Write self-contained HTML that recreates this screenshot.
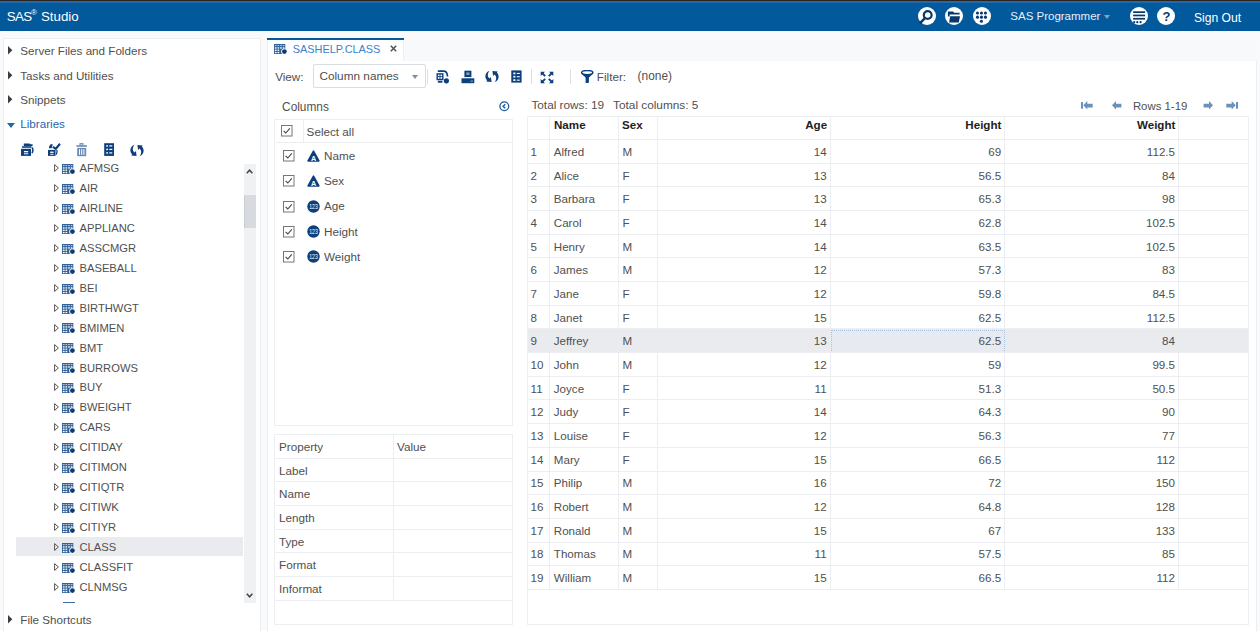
<!DOCTYPE html><html><head><meta charset="utf-8"><style>
html,body{margin:0;padding:0;width:1260px;height:631px;overflow:hidden;background:#fff}
body{position:relative;font-family:"Liberation Sans",sans-serif}
.t{position:absolute;white-space:nowrap;line-height:1}
.r{position:absolute;display:block}
sup{font-size:60%;vertical-align:0;position:relative;top:-0.55em}
</style></head><body>
<div class="r" style="left:0.00px;top:0.00px;width:1260.00px;height:1.20px;background:#2b2420"></div>
<div class="r" style="left:0.00px;top:1.00px;width:1260.00px;height:30.00px;background:#02599b"></div>
<div class="r" style="left:0.00px;top:1.00px;width:1260.00px;height:1.50px;background:#1f6aac"></div>
<div class="t" style="left:6.80px;top:9.84px;font-size:13.3px;color:#fff;font-weight:normal;letter-spacing:-0.6px">SAS</div>
<div class="t" style="left:31.00px;top:9.43px;font-size:8px;color:#fff;font-weight:normal;">®</div>
<div class="t" style="left:41.00px;top:9.84px;font-size:13.3px;color:#fff;font-weight:normal;">Studio</div>
<svg class="r" style="left:918.40px;top:6.90px" width="18" height="18" viewBox="0 0 18 18"><circle cx="9" cy="9" r="9" fill="#fff"/><circle cx="9.7" cy="8.0" r="3.9" fill="none" stroke="#08396c" stroke-width="2.2"/><path d="M7.2 10.8L1.8 16.4" stroke="#08396c" stroke-width="2.4" stroke-linecap="butt"/></svg>
<svg class="r" style="left:945.35px;top:6.90px" width="18" height="18" viewBox="0 0 18 18"><circle cx="9" cy="9" r="9" fill="#fff"/><path d="M2.9 4.4H8L9.3 5.8H14.6V7.4H4.6V9.6H2.9Z" fill="#08396c"/><path d="M5.1 9.2H15L13.8 15.6H4.1Z" fill="#08396c"/></svg>
<svg class="r" style="left:973.00px;top:6.90px" width="18" height="18" viewBox="0 0 18 18"><circle cx="9" cy="9" r="9" fill="#fff"/><circle cx="4.449999999999999" cy="5.95" r="1.55" fill="#08396c"/><circle cx="8.45" cy="5.95" r="1.55" fill="#08396c"/><circle cx="12.45" cy="5.95" r="1.55" fill="#08396c"/><circle cx="4.449999999999999" cy="10.129999999999999" r="1.55" fill="#08396c"/><circle cx="8.45" cy="10.129999999999999" r="1.55" fill="#08396c"/><circle cx="12.45" cy="10.129999999999999" r="1.55" fill="#08396c"/><circle cx="8.45" cy="14.3" r="1.55" fill="#08396c"/></svg>
<svg class="r" style="left:1130.00px;top:6.90px" width="18" height="18" viewBox="0 0 18 18"><circle cx="9" cy="9" r="9" fill="#fff"/><rect x="3.1" y="4.3" width="12" height="1.7" fill="#08396c"/><rect x="3.1" y="7.6000000000000005" width="12" height="1.7" fill="#08396c"/><rect x="3.1" y="10.899999999999999" width="12" height="1.7" fill="#08396c"/><circle cx="4.2" cy="15.2" r="1.1" fill="#08396c"/><circle cx="7.3" cy="15.2" r="1.1" fill="#08396c"/><circle cx="10.6" cy="15.2" r="1.1" fill="#08396c"/></svg>
<svg class="r" style="left:1157.00px;top:6.90px" width="18" height="18" viewBox="0 0 18 18"><circle cx="9" cy="9" r="9" fill="#fff"/><text x="9.6" y="13.6" font-size="13" font-weight="bold" font-family="Liberation Sans" fill="#08396c" text-anchor="middle">?</text></svg>
<div class="t" style="left:1010.30px;top:10.87px;font-size:11.5px;color:#e8eef6;font-weight:normal;">SAS Programmer</div>
<svg class="r" style="left:1104.00px;top:15.00px" width="6" height="4" viewBox="0 0 6 4"><path d="M0 0H6L3 4Z" fill="#7fa3cc"/></svg>
<div class="t" style="left:1194.00px;top:11.76px;font-size:12.1px;color:#fff;font-weight:normal;">Sign Out</div>
<div class="r" style="left:0.00px;top:31.00px;width:1260.00px;height:600.00px;background:#f9fafb"></div>
<div class="r" style="left:3.00px;top:37.50px;width:257.50px;height:600.00px;background:#fff;border:1px solid #eceef1;box-sizing:border-box"></div>
<div class="t" style="left:20.30px;top:45.24px;font-size:11.65px;color:#505050;font-weight:normal;">Server Files and Folders</div>
<svg class="r" style="left:8.00px;top:46.20px" width="5" height="9" viewBox="0 0 5 9"><path d="M0 0L4.3 4.25L0 8.5Z" fill="#3a3a42"/></svg>
<div class="t" style="left:20.30px;top:69.64px;font-size:11.65px;color:#505050;font-weight:normal;">Tasks and Utilities</div>
<svg class="r" style="left:8.00px;top:70.60px" width="5" height="9" viewBox="0 0 5 9"><path d="M0 0L4.3 4.25L0 8.5Z" fill="#3a3a42"/></svg>
<div class="t" style="left:20.30px;top:93.84px;font-size:11.65px;color:#505050;font-weight:normal;">Snippets</div>
<svg class="r" style="left:8.00px;top:94.80px" width="5" height="9" viewBox="0 0 5 9"><path d="M0 0L4.3 4.25L0 8.5Z" fill="#3a3a42"/></svg>
<div class="t" style="left:20.30px;top:117.94px;font-size:11.65px;color:#1f66ae;font-weight:normal;">Libraries</div>
<svg class="r" style="left:6.80px;top:122.50px" width="8" height="5" viewBox="0 0 8 5"><path d="M0 0H8L4 5Z" fill="#1f66ae"/></svg>
<div class="t" style="left:20.30px;top:613.74px;font-size:11.65px;color:#505050;font-weight:normal;">File Shortcuts</div>
<svg class="r" style="left:8.00px;top:614.70px" width="5" height="9" viewBox="0 0 5 9"><path d="M0 0L4.3 4.25L0 8.5Z" fill="#3a3a42"/></svg>
<svg class="r" style="left:20.00px;top:143.00px" width="14" height="14" viewBox="0 0 14 14"><path d="M3.8 0.5H9.5L10.3 1.3H12.6V3H3.8Z" fill="#0d3f7d"/><path d="M2 3.2H11.5V4.8H2Z" fill="#0d3f7d"/><path d="M1 5.8H11V12.9H1Z" fill="#0d3f7d"/><rect x="4" y="8" width="4.2" height="1.3" fill="#fff"/><rect x="4" y="10.3" width="4.2" height="1" fill="#fff"/><path d="M12 4.4Q13.8 7 12 10.2" fill="none" stroke="#0d3f7d" stroke-width="1.5"/></svg>
<svg class="r" style="left:47.00px;top:143.00px" width="14" height="14" viewBox="0 0 14 14"><path d="M1 6.9H8.5V12.9H1Z" fill="#0d3f7d"/><rect x="3.2" y="8.6" width="3.4" height="1.3" fill="#fff"/><rect x="3.2" y="10.8" width="3.4" height="0.9" fill="#fff"/><path d="M2 3.6L3.6 1.2H5.8L4.6 5.2H2Z" fill="#0d3f7d"/><path d="M5.8 3.8L8.8 5.8L13 0.8" fill="none" stroke="#0d3f7d" stroke-width="2.1"/><path d="M9.8 7Q10.6 9.4 9.2 11.6" fill="none" stroke="#0d3f7d" stroke-width="1.3"/></svg>
<svg class="r" style="left:76.00px;top:142.50px" width="12" height="14" viewBox="0 0 12 14"><rect x="4" y="0.6" width="3" height="1.6" fill="none" stroke="#6a8db5" stroke-width="1"/><rect x="0.4" y="2.2" width="10.6" height="1.6" fill="#6a8db5"/><rect x="1.2" y="4.9" width="9" height="8.3" fill="#6a8db5"/><rect x="3.0" y="6.2" width="1" height="5.6" fill="#fff"/><rect x="5.2" y="6.2" width="1" height="5.6" fill="#fff"/><rect x="7.4" y="6.2" width="1" height="5.6" fill="#fff"/></svg>
<svg class="r" style="left:104.00px;top:143.00px" width="11" height="13" viewBox="0 0 11 13"><rect x="0.2" y="0.2" width="9.8" height="12.7" fill="#0d3f7d"/><rect x="2.3" y="2.1" width="1.6" height="1.6" fill="#fff"/><rect x="5.3" y="2.3000000000000003" width="3" height="1.2" fill="#fff"/><rect x="2.3" y="5.6" width="1.6" height="1.6" fill="#fff"/><rect x="5.3" y="5.8" width="3" height="1.2" fill="#fff"/><rect x="2.3" y="9.1" width="1.6" height="1.6" fill="#fff"/><rect x="5.3" y="9.299999999999999" width="3" height="1.2" fill="#fff"/></svg>
<svg class="r" style="left:129.80px;top:143.50px" width="14" height="13" viewBox="0 0 14 13"><path d="M4.4 0.7C1.6 1.7 0.1 4.2 0.4 7C0.6 8.5 1.3 9.5 2.1 10.2L1.3 11.6L6.6 11.9L5.9 6.9L4.6 8.5C3.5 7.7 2.7 6.5 2.8 5.1C2.9 3.3 3.6 1.9 4.4 0.7Z" fill="#0d3f7d"/><path d="M9.6 12.3C12.4 11.3 13.9 8.8 13.6 6C13.4 4.5 12.7 3.5 11.9 2.8L12.7 1.4L7.4 1.1L8.1 6.1L9.4 4.5C10.5 5.3 11.3 6.5 11.2 7.9C11.1 9.7 10.4 11.1 9.6 12.3Z" fill="#0d3f7d"/></svg>
<div class="r" style="left:243.70px;top:163.60px;width:12.30px;height:439.00px;background:#eff1f3"></div>
<div class="r" style="left:243.70px;top:195.10px;width:12.30px;height:33.40px;background:#d7dadf;border-left:1px solid #c9ced4;box-sizing:border-box"></div>
<svg class="r" style="left:246.30px;top:168.50px" width="8" height="5" viewBox="0 0 8 5"><path d="M0.8 4.2L3.6 1.2L6.4 4.2" fill="none" stroke="#444" stroke-width="1.5"/></svg>
<svg class="r" style="left:246.30px;top:593.30px" width="8" height="5" viewBox="0 0 8 5"><path d="M0.8 0.8L3.6 3.8L6.4 0.8" fill="none" stroke="#444" stroke-width="1.5"/></svg>
<div class="r" style="left:62.50px;top:601.80px;width:12.50px;height:1.60px;background:#3f6b9e"></div>
<svg class="r" style="left:53.70px;top:164.20px" width="5" height="8" viewBox="0 0 5 8"><path d="M0.6 0.6L4.4 4L0.6 7.4Z" fill="none" stroke="#555" stroke-width="1"/></svg>
<svg class="r" style="left:62.00px;top:164.00px" width="13" height="11" viewBox="0 0 13 11"><rect x="0" y="0" width="11.3" height="10" fill="#32629a"/><rect x="0.9" y="1.2" width="1.7" height="0.9" fill="#fff" opacity="0.8"/><rect x="3.5" y="1.2" width="1.7" height="0.9" fill="#fff" opacity="0.8"/><rect x="6.1" y="1.2" width="1.7" height="0.9" fill="#fff" opacity="0.8"/><rect x="8.7" y="1.2" width="1.7" height="0.9" fill="#fff" opacity="0.8"/><rect x="0.9" y="3.3" width="1.7" height="1.3" fill="#fff"/><rect x="0.9" y="5.6" width="1.7" height="1.3" fill="#fff"/><rect x="0.9" y="7.9" width="1.7" height="1.3" fill="#fff"/><rect x="3.5" y="3.3" width="1.7" height="1.3" fill="#fff"/><rect x="3.5" y="5.6" width="1.7" height="1.3" fill="#fff"/><rect x="3.5" y="7.9" width="1.7" height="1.3" fill="#fff"/><rect x="6.1" y="3.3" width="1.7" height="1.3" fill="#fff"/><rect x="8.7" y="3.3" width="1.7" height="1.3" fill="#fff"/><circle cx="10.4" cy="7.6" r="3.2" fill="#fff"/><circle cx="10.4" cy="7.6" r="2.4" fill="#0c3c72"/></svg>
<div class="t" style="left:79.50px;top:163.22px;font-size:11.2px;color:#505050;font-weight:normal;">AFMSG</div>
<svg class="r" style="left:53.70px;top:184.13px" width="5" height="8" viewBox="0 0 5 8"><path d="M0.6 0.6L4.4 4L0.6 7.4Z" fill="none" stroke="#555" stroke-width="1"/></svg>
<svg class="r" style="left:62.00px;top:183.93px" width="13" height="11" viewBox="0 0 13 11"><rect x="0" y="0" width="11.3" height="10" fill="#32629a"/><rect x="0.9" y="1.2" width="1.7" height="0.9" fill="#fff" opacity="0.8"/><rect x="3.5" y="1.2" width="1.7" height="0.9" fill="#fff" opacity="0.8"/><rect x="6.1" y="1.2" width="1.7" height="0.9" fill="#fff" opacity="0.8"/><rect x="8.7" y="1.2" width="1.7" height="0.9" fill="#fff" opacity="0.8"/><rect x="0.9" y="3.3" width="1.7" height="1.3" fill="#fff"/><rect x="0.9" y="5.6" width="1.7" height="1.3" fill="#fff"/><rect x="0.9" y="7.9" width="1.7" height="1.3" fill="#fff"/><rect x="3.5" y="3.3" width="1.7" height="1.3" fill="#fff"/><rect x="3.5" y="5.6" width="1.7" height="1.3" fill="#fff"/><rect x="3.5" y="7.9" width="1.7" height="1.3" fill="#fff"/><rect x="6.1" y="3.3" width="1.7" height="1.3" fill="#fff"/><rect x="8.7" y="3.3" width="1.7" height="1.3" fill="#fff"/><circle cx="10.4" cy="7.6" r="3.2" fill="#fff"/><circle cx="10.4" cy="7.6" r="2.4" fill="#0c3c72"/></svg>
<div class="t" style="left:79.50px;top:183.15px;font-size:11.2px;color:#505050;font-weight:normal;">AIR</div>
<svg class="r" style="left:53.70px;top:204.06px" width="5" height="8" viewBox="0 0 5 8"><path d="M0.6 0.6L4.4 4L0.6 7.4Z" fill="none" stroke="#555" stroke-width="1"/></svg>
<svg class="r" style="left:62.00px;top:203.86px" width="13" height="11" viewBox="0 0 13 11"><rect x="0" y="0" width="11.3" height="10" fill="#32629a"/><rect x="0.9" y="1.2" width="1.7" height="0.9" fill="#fff" opacity="0.8"/><rect x="3.5" y="1.2" width="1.7" height="0.9" fill="#fff" opacity="0.8"/><rect x="6.1" y="1.2" width="1.7" height="0.9" fill="#fff" opacity="0.8"/><rect x="8.7" y="1.2" width="1.7" height="0.9" fill="#fff" opacity="0.8"/><rect x="0.9" y="3.3" width="1.7" height="1.3" fill="#fff"/><rect x="0.9" y="5.6" width="1.7" height="1.3" fill="#fff"/><rect x="0.9" y="7.9" width="1.7" height="1.3" fill="#fff"/><rect x="3.5" y="3.3" width="1.7" height="1.3" fill="#fff"/><rect x="3.5" y="5.6" width="1.7" height="1.3" fill="#fff"/><rect x="3.5" y="7.9" width="1.7" height="1.3" fill="#fff"/><rect x="6.1" y="3.3" width="1.7" height="1.3" fill="#fff"/><rect x="8.7" y="3.3" width="1.7" height="1.3" fill="#fff"/><circle cx="10.4" cy="7.6" r="3.2" fill="#fff"/><circle cx="10.4" cy="7.6" r="2.4" fill="#0c3c72"/></svg>
<div class="t" style="left:79.50px;top:203.08px;font-size:11.2px;color:#505050;font-weight:normal;">AIRLINE</div>
<svg class="r" style="left:53.70px;top:223.99px" width="5" height="8" viewBox="0 0 5 8"><path d="M0.6 0.6L4.4 4L0.6 7.4Z" fill="none" stroke="#555" stroke-width="1"/></svg>
<svg class="r" style="left:62.00px;top:223.79px" width="13" height="11" viewBox="0 0 13 11"><rect x="0" y="0" width="11.3" height="10" fill="#32629a"/><rect x="0.9" y="1.2" width="1.7" height="0.9" fill="#fff" opacity="0.8"/><rect x="3.5" y="1.2" width="1.7" height="0.9" fill="#fff" opacity="0.8"/><rect x="6.1" y="1.2" width="1.7" height="0.9" fill="#fff" opacity="0.8"/><rect x="8.7" y="1.2" width="1.7" height="0.9" fill="#fff" opacity="0.8"/><rect x="0.9" y="3.3" width="1.7" height="1.3" fill="#fff"/><rect x="0.9" y="5.6" width="1.7" height="1.3" fill="#fff"/><rect x="0.9" y="7.9" width="1.7" height="1.3" fill="#fff"/><rect x="3.5" y="3.3" width="1.7" height="1.3" fill="#fff"/><rect x="3.5" y="5.6" width="1.7" height="1.3" fill="#fff"/><rect x="3.5" y="7.9" width="1.7" height="1.3" fill="#fff"/><rect x="6.1" y="3.3" width="1.7" height="1.3" fill="#fff"/><rect x="8.7" y="3.3" width="1.7" height="1.3" fill="#fff"/><circle cx="10.4" cy="7.6" r="3.2" fill="#fff"/><circle cx="10.4" cy="7.6" r="2.4" fill="#0c3c72"/></svg>
<div class="t" style="left:79.50px;top:223.01px;font-size:11.2px;color:#505050;font-weight:normal;">APPLIANC</div>
<svg class="r" style="left:53.70px;top:243.92px" width="5" height="8" viewBox="0 0 5 8"><path d="M0.6 0.6L4.4 4L0.6 7.4Z" fill="none" stroke="#555" stroke-width="1"/></svg>
<svg class="r" style="left:62.00px;top:243.72px" width="13" height="11" viewBox="0 0 13 11"><rect x="0" y="0" width="11.3" height="10" fill="#32629a"/><rect x="0.9" y="1.2" width="1.7" height="0.9" fill="#fff" opacity="0.8"/><rect x="3.5" y="1.2" width="1.7" height="0.9" fill="#fff" opacity="0.8"/><rect x="6.1" y="1.2" width="1.7" height="0.9" fill="#fff" opacity="0.8"/><rect x="8.7" y="1.2" width="1.7" height="0.9" fill="#fff" opacity="0.8"/><rect x="0.9" y="3.3" width="1.7" height="1.3" fill="#fff"/><rect x="0.9" y="5.6" width="1.7" height="1.3" fill="#fff"/><rect x="0.9" y="7.9" width="1.7" height="1.3" fill="#fff"/><rect x="3.5" y="3.3" width="1.7" height="1.3" fill="#fff"/><rect x="3.5" y="5.6" width="1.7" height="1.3" fill="#fff"/><rect x="3.5" y="7.9" width="1.7" height="1.3" fill="#fff"/><rect x="6.1" y="3.3" width="1.7" height="1.3" fill="#fff"/><rect x="8.7" y="3.3" width="1.7" height="1.3" fill="#fff"/><circle cx="10.4" cy="7.6" r="3.2" fill="#fff"/><circle cx="10.4" cy="7.6" r="2.4" fill="#0c3c72"/></svg>
<div class="t" style="left:79.50px;top:242.94px;font-size:11.2px;color:#505050;font-weight:normal;">ASSCMGR</div>
<svg class="r" style="left:53.70px;top:263.85px" width="5" height="8" viewBox="0 0 5 8"><path d="M0.6 0.6L4.4 4L0.6 7.4Z" fill="none" stroke="#555" stroke-width="1"/></svg>
<svg class="r" style="left:62.00px;top:263.65px" width="13" height="11" viewBox="0 0 13 11"><rect x="0" y="0" width="11.3" height="10" fill="#32629a"/><rect x="0.9" y="1.2" width="1.7" height="0.9" fill="#fff" opacity="0.8"/><rect x="3.5" y="1.2" width="1.7" height="0.9" fill="#fff" opacity="0.8"/><rect x="6.1" y="1.2" width="1.7" height="0.9" fill="#fff" opacity="0.8"/><rect x="8.7" y="1.2" width="1.7" height="0.9" fill="#fff" opacity="0.8"/><rect x="0.9" y="3.3" width="1.7" height="1.3" fill="#fff"/><rect x="0.9" y="5.6" width="1.7" height="1.3" fill="#fff"/><rect x="0.9" y="7.9" width="1.7" height="1.3" fill="#fff"/><rect x="3.5" y="3.3" width="1.7" height="1.3" fill="#fff"/><rect x="3.5" y="5.6" width="1.7" height="1.3" fill="#fff"/><rect x="3.5" y="7.9" width="1.7" height="1.3" fill="#fff"/><rect x="6.1" y="3.3" width="1.7" height="1.3" fill="#fff"/><rect x="8.7" y="3.3" width="1.7" height="1.3" fill="#fff"/><circle cx="10.4" cy="7.6" r="3.2" fill="#fff"/><circle cx="10.4" cy="7.6" r="2.4" fill="#0c3c72"/></svg>
<div class="t" style="left:79.50px;top:262.87px;font-size:11.2px;color:#505050;font-weight:normal;">BASEBALL</div>
<svg class="r" style="left:53.70px;top:283.78px" width="5" height="8" viewBox="0 0 5 8"><path d="M0.6 0.6L4.4 4L0.6 7.4Z" fill="none" stroke="#555" stroke-width="1"/></svg>
<svg class="r" style="left:62.00px;top:283.58px" width="13" height="11" viewBox="0 0 13 11"><rect x="0" y="0" width="11.3" height="10" fill="#32629a"/><rect x="0.9" y="1.2" width="1.7" height="0.9" fill="#fff" opacity="0.8"/><rect x="3.5" y="1.2" width="1.7" height="0.9" fill="#fff" opacity="0.8"/><rect x="6.1" y="1.2" width="1.7" height="0.9" fill="#fff" opacity="0.8"/><rect x="8.7" y="1.2" width="1.7" height="0.9" fill="#fff" opacity="0.8"/><rect x="0.9" y="3.3" width="1.7" height="1.3" fill="#fff"/><rect x="0.9" y="5.6" width="1.7" height="1.3" fill="#fff"/><rect x="0.9" y="7.9" width="1.7" height="1.3" fill="#fff"/><rect x="3.5" y="3.3" width="1.7" height="1.3" fill="#fff"/><rect x="3.5" y="5.6" width="1.7" height="1.3" fill="#fff"/><rect x="3.5" y="7.9" width="1.7" height="1.3" fill="#fff"/><rect x="6.1" y="3.3" width="1.7" height="1.3" fill="#fff"/><rect x="8.7" y="3.3" width="1.7" height="1.3" fill="#fff"/><circle cx="10.4" cy="7.6" r="3.2" fill="#fff"/><circle cx="10.4" cy="7.6" r="2.4" fill="#0c3c72"/></svg>
<div class="t" style="left:79.50px;top:282.80px;font-size:11.2px;color:#505050;font-weight:normal;">BEI</div>
<svg class="r" style="left:53.70px;top:303.71px" width="5" height="8" viewBox="0 0 5 8"><path d="M0.6 0.6L4.4 4L0.6 7.4Z" fill="none" stroke="#555" stroke-width="1"/></svg>
<svg class="r" style="left:62.00px;top:303.51px" width="13" height="11" viewBox="0 0 13 11"><rect x="0" y="0" width="11.3" height="10" fill="#32629a"/><rect x="0.9" y="1.2" width="1.7" height="0.9" fill="#fff" opacity="0.8"/><rect x="3.5" y="1.2" width="1.7" height="0.9" fill="#fff" opacity="0.8"/><rect x="6.1" y="1.2" width="1.7" height="0.9" fill="#fff" opacity="0.8"/><rect x="8.7" y="1.2" width="1.7" height="0.9" fill="#fff" opacity="0.8"/><rect x="0.9" y="3.3" width="1.7" height="1.3" fill="#fff"/><rect x="0.9" y="5.6" width="1.7" height="1.3" fill="#fff"/><rect x="0.9" y="7.9" width="1.7" height="1.3" fill="#fff"/><rect x="3.5" y="3.3" width="1.7" height="1.3" fill="#fff"/><rect x="3.5" y="5.6" width="1.7" height="1.3" fill="#fff"/><rect x="3.5" y="7.9" width="1.7" height="1.3" fill="#fff"/><rect x="6.1" y="3.3" width="1.7" height="1.3" fill="#fff"/><rect x="8.7" y="3.3" width="1.7" height="1.3" fill="#fff"/><circle cx="10.4" cy="7.6" r="3.2" fill="#fff"/><circle cx="10.4" cy="7.6" r="2.4" fill="#0c3c72"/></svg>
<div class="t" style="left:79.50px;top:302.73px;font-size:11.2px;color:#505050;font-weight:normal;">BIRTHWGT</div>
<svg class="r" style="left:53.70px;top:323.64px" width="5" height="8" viewBox="0 0 5 8"><path d="M0.6 0.6L4.4 4L0.6 7.4Z" fill="none" stroke="#555" stroke-width="1"/></svg>
<svg class="r" style="left:62.00px;top:323.44px" width="13" height="11" viewBox="0 0 13 11"><rect x="0" y="0" width="11.3" height="10" fill="#32629a"/><rect x="0.9" y="1.2" width="1.7" height="0.9" fill="#fff" opacity="0.8"/><rect x="3.5" y="1.2" width="1.7" height="0.9" fill="#fff" opacity="0.8"/><rect x="6.1" y="1.2" width="1.7" height="0.9" fill="#fff" opacity="0.8"/><rect x="8.7" y="1.2" width="1.7" height="0.9" fill="#fff" opacity="0.8"/><rect x="0.9" y="3.3" width="1.7" height="1.3" fill="#fff"/><rect x="0.9" y="5.6" width="1.7" height="1.3" fill="#fff"/><rect x="0.9" y="7.9" width="1.7" height="1.3" fill="#fff"/><rect x="3.5" y="3.3" width="1.7" height="1.3" fill="#fff"/><rect x="3.5" y="5.6" width="1.7" height="1.3" fill="#fff"/><rect x="3.5" y="7.9" width="1.7" height="1.3" fill="#fff"/><rect x="6.1" y="3.3" width="1.7" height="1.3" fill="#fff"/><rect x="8.7" y="3.3" width="1.7" height="1.3" fill="#fff"/><circle cx="10.4" cy="7.6" r="3.2" fill="#fff"/><circle cx="10.4" cy="7.6" r="2.4" fill="#0c3c72"/></svg>
<div class="t" style="left:79.50px;top:322.66px;font-size:11.2px;color:#505050;font-weight:normal;">BMIMEN</div>
<svg class="r" style="left:53.70px;top:343.57px" width="5" height="8" viewBox="0 0 5 8"><path d="M0.6 0.6L4.4 4L0.6 7.4Z" fill="none" stroke="#555" stroke-width="1"/></svg>
<svg class="r" style="left:62.00px;top:343.37px" width="13" height="11" viewBox="0 0 13 11"><rect x="0" y="0" width="11.3" height="10" fill="#32629a"/><rect x="0.9" y="1.2" width="1.7" height="0.9" fill="#fff" opacity="0.8"/><rect x="3.5" y="1.2" width="1.7" height="0.9" fill="#fff" opacity="0.8"/><rect x="6.1" y="1.2" width="1.7" height="0.9" fill="#fff" opacity="0.8"/><rect x="8.7" y="1.2" width="1.7" height="0.9" fill="#fff" opacity="0.8"/><rect x="0.9" y="3.3" width="1.7" height="1.3" fill="#fff"/><rect x="0.9" y="5.6" width="1.7" height="1.3" fill="#fff"/><rect x="0.9" y="7.9" width="1.7" height="1.3" fill="#fff"/><rect x="3.5" y="3.3" width="1.7" height="1.3" fill="#fff"/><rect x="3.5" y="5.6" width="1.7" height="1.3" fill="#fff"/><rect x="3.5" y="7.9" width="1.7" height="1.3" fill="#fff"/><rect x="6.1" y="3.3" width="1.7" height="1.3" fill="#fff"/><rect x="8.7" y="3.3" width="1.7" height="1.3" fill="#fff"/><circle cx="10.4" cy="7.6" r="3.2" fill="#fff"/><circle cx="10.4" cy="7.6" r="2.4" fill="#0c3c72"/></svg>
<div class="t" style="left:79.50px;top:342.59px;font-size:11.2px;color:#505050;font-weight:normal;">BMT</div>
<svg class="r" style="left:53.70px;top:363.50px" width="5" height="8" viewBox="0 0 5 8"><path d="M0.6 0.6L4.4 4L0.6 7.4Z" fill="none" stroke="#555" stroke-width="1"/></svg>
<svg class="r" style="left:62.00px;top:363.30px" width="13" height="11" viewBox="0 0 13 11"><rect x="0" y="0" width="11.3" height="10" fill="#32629a"/><rect x="0.9" y="1.2" width="1.7" height="0.9" fill="#fff" opacity="0.8"/><rect x="3.5" y="1.2" width="1.7" height="0.9" fill="#fff" opacity="0.8"/><rect x="6.1" y="1.2" width="1.7" height="0.9" fill="#fff" opacity="0.8"/><rect x="8.7" y="1.2" width="1.7" height="0.9" fill="#fff" opacity="0.8"/><rect x="0.9" y="3.3" width="1.7" height="1.3" fill="#fff"/><rect x="0.9" y="5.6" width="1.7" height="1.3" fill="#fff"/><rect x="0.9" y="7.9" width="1.7" height="1.3" fill="#fff"/><rect x="3.5" y="3.3" width="1.7" height="1.3" fill="#fff"/><rect x="3.5" y="5.6" width="1.7" height="1.3" fill="#fff"/><rect x="3.5" y="7.9" width="1.7" height="1.3" fill="#fff"/><rect x="6.1" y="3.3" width="1.7" height="1.3" fill="#fff"/><rect x="8.7" y="3.3" width="1.7" height="1.3" fill="#fff"/><circle cx="10.4" cy="7.6" r="3.2" fill="#fff"/><circle cx="10.4" cy="7.6" r="2.4" fill="#0c3c72"/></svg>
<div class="t" style="left:79.50px;top:362.52px;font-size:11.2px;color:#505050;font-weight:normal;">BURROWS</div>
<svg class="r" style="left:53.70px;top:383.43px" width="5" height="8" viewBox="0 0 5 8"><path d="M0.6 0.6L4.4 4L0.6 7.4Z" fill="none" stroke="#555" stroke-width="1"/></svg>
<svg class="r" style="left:62.00px;top:383.23px" width="13" height="11" viewBox="0 0 13 11"><rect x="0" y="0" width="11.3" height="10" fill="#32629a"/><rect x="0.9" y="1.2" width="1.7" height="0.9" fill="#fff" opacity="0.8"/><rect x="3.5" y="1.2" width="1.7" height="0.9" fill="#fff" opacity="0.8"/><rect x="6.1" y="1.2" width="1.7" height="0.9" fill="#fff" opacity="0.8"/><rect x="8.7" y="1.2" width="1.7" height="0.9" fill="#fff" opacity="0.8"/><rect x="0.9" y="3.3" width="1.7" height="1.3" fill="#fff"/><rect x="0.9" y="5.6" width="1.7" height="1.3" fill="#fff"/><rect x="0.9" y="7.9" width="1.7" height="1.3" fill="#fff"/><rect x="3.5" y="3.3" width="1.7" height="1.3" fill="#fff"/><rect x="3.5" y="5.6" width="1.7" height="1.3" fill="#fff"/><rect x="3.5" y="7.9" width="1.7" height="1.3" fill="#fff"/><rect x="6.1" y="3.3" width="1.7" height="1.3" fill="#fff"/><rect x="8.7" y="3.3" width="1.7" height="1.3" fill="#fff"/><circle cx="10.4" cy="7.6" r="3.2" fill="#fff"/><circle cx="10.4" cy="7.6" r="2.4" fill="#0c3c72"/></svg>
<div class="t" style="left:79.50px;top:382.45px;font-size:11.2px;color:#505050;font-weight:normal;">BUY</div>
<svg class="r" style="left:53.70px;top:403.36px" width="5" height="8" viewBox="0 0 5 8"><path d="M0.6 0.6L4.4 4L0.6 7.4Z" fill="none" stroke="#555" stroke-width="1"/></svg>
<svg class="r" style="left:62.00px;top:403.16px" width="13" height="11" viewBox="0 0 13 11"><rect x="0" y="0" width="11.3" height="10" fill="#32629a"/><rect x="0.9" y="1.2" width="1.7" height="0.9" fill="#fff" opacity="0.8"/><rect x="3.5" y="1.2" width="1.7" height="0.9" fill="#fff" opacity="0.8"/><rect x="6.1" y="1.2" width="1.7" height="0.9" fill="#fff" opacity="0.8"/><rect x="8.7" y="1.2" width="1.7" height="0.9" fill="#fff" opacity="0.8"/><rect x="0.9" y="3.3" width="1.7" height="1.3" fill="#fff"/><rect x="0.9" y="5.6" width="1.7" height="1.3" fill="#fff"/><rect x="0.9" y="7.9" width="1.7" height="1.3" fill="#fff"/><rect x="3.5" y="3.3" width="1.7" height="1.3" fill="#fff"/><rect x="3.5" y="5.6" width="1.7" height="1.3" fill="#fff"/><rect x="3.5" y="7.9" width="1.7" height="1.3" fill="#fff"/><rect x="6.1" y="3.3" width="1.7" height="1.3" fill="#fff"/><rect x="8.7" y="3.3" width="1.7" height="1.3" fill="#fff"/><circle cx="10.4" cy="7.6" r="3.2" fill="#fff"/><circle cx="10.4" cy="7.6" r="2.4" fill="#0c3c72"/></svg>
<div class="t" style="left:79.50px;top:402.38px;font-size:11.2px;color:#505050;font-weight:normal;">BWEIGHT</div>
<svg class="r" style="left:53.70px;top:423.29px" width="5" height="8" viewBox="0 0 5 8"><path d="M0.6 0.6L4.4 4L0.6 7.4Z" fill="none" stroke="#555" stroke-width="1"/></svg>
<svg class="r" style="left:62.00px;top:423.09px" width="13" height="11" viewBox="0 0 13 11"><rect x="0" y="0" width="11.3" height="10" fill="#32629a"/><rect x="0.9" y="1.2" width="1.7" height="0.9" fill="#fff" opacity="0.8"/><rect x="3.5" y="1.2" width="1.7" height="0.9" fill="#fff" opacity="0.8"/><rect x="6.1" y="1.2" width="1.7" height="0.9" fill="#fff" opacity="0.8"/><rect x="8.7" y="1.2" width="1.7" height="0.9" fill="#fff" opacity="0.8"/><rect x="0.9" y="3.3" width="1.7" height="1.3" fill="#fff"/><rect x="0.9" y="5.6" width="1.7" height="1.3" fill="#fff"/><rect x="0.9" y="7.9" width="1.7" height="1.3" fill="#fff"/><rect x="3.5" y="3.3" width="1.7" height="1.3" fill="#fff"/><rect x="3.5" y="5.6" width="1.7" height="1.3" fill="#fff"/><rect x="3.5" y="7.9" width="1.7" height="1.3" fill="#fff"/><rect x="6.1" y="3.3" width="1.7" height="1.3" fill="#fff"/><rect x="8.7" y="3.3" width="1.7" height="1.3" fill="#fff"/><circle cx="10.4" cy="7.6" r="3.2" fill="#fff"/><circle cx="10.4" cy="7.6" r="2.4" fill="#0c3c72"/></svg>
<div class="t" style="left:79.50px;top:422.31px;font-size:11.2px;color:#505050;font-weight:normal;">CARS</div>
<svg class="r" style="left:53.70px;top:443.22px" width="5" height="8" viewBox="0 0 5 8"><path d="M0.6 0.6L4.4 4L0.6 7.4Z" fill="none" stroke="#555" stroke-width="1"/></svg>
<svg class="r" style="left:62.00px;top:443.02px" width="13" height="11" viewBox="0 0 13 11"><rect x="0" y="0" width="11.3" height="10" fill="#32629a"/><rect x="0.9" y="1.2" width="1.7" height="0.9" fill="#fff" opacity="0.8"/><rect x="3.5" y="1.2" width="1.7" height="0.9" fill="#fff" opacity="0.8"/><rect x="6.1" y="1.2" width="1.7" height="0.9" fill="#fff" opacity="0.8"/><rect x="8.7" y="1.2" width="1.7" height="0.9" fill="#fff" opacity="0.8"/><rect x="0.9" y="3.3" width="1.7" height="1.3" fill="#fff"/><rect x="0.9" y="5.6" width="1.7" height="1.3" fill="#fff"/><rect x="0.9" y="7.9" width="1.7" height="1.3" fill="#fff"/><rect x="3.5" y="3.3" width="1.7" height="1.3" fill="#fff"/><rect x="3.5" y="5.6" width="1.7" height="1.3" fill="#fff"/><rect x="3.5" y="7.9" width="1.7" height="1.3" fill="#fff"/><rect x="6.1" y="3.3" width="1.7" height="1.3" fill="#fff"/><rect x="8.7" y="3.3" width="1.7" height="1.3" fill="#fff"/><circle cx="10.4" cy="7.6" r="3.2" fill="#fff"/><circle cx="10.4" cy="7.6" r="2.4" fill="#0c3c72"/></svg>
<div class="t" style="left:79.50px;top:442.24px;font-size:11.2px;color:#505050;font-weight:normal;">CITIDAY</div>
<svg class="r" style="left:53.70px;top:463.15px" width="5" height="8" viewBox="0 0 5 8"><path d="M0.6 0.6L4.4 4L0.6 7.4Z" fill="none" stroke="#555" stroke-width="1"/></svg>
<svg class="r" style="left:62.00px;top:462.95px" width="13" height="11" viewBox="0 0 13 11"><rect x="0" y="0" width="11.3" height="10" fill="#32629a"/><rect x="0.9" y="1.2" width="1.7" height="0.9" fill="#fff" opacity="0.8"/><rect x="3.5" y="1.2" width="1.7" height="0.9" fill="#fff" opacity="0.8"/><rect x="6.1" y="1.2" width="1.7" height="0.9" fill="#fff" opacity="0.8"/><rect x="8.7" y="1.2" width="1.7" height="0.9" fill="#fff" opacity="0.8"/><rect x="0.9" y="3.3" width="1.7" height="1.3" fill="#fff"/><rect x="0.9" y="5.6" width="1.7" height="1.3" fill="#fff"/><rect x="0.9" y="7.9" width="1.7" height="1.3" fill="#fff"/><rect x="3.5" y="3.3" width="1.7" height="1.3" fill="#fff"/><rect x="3.5" y="5.6" width="1.7" height="1.3" fill="#fff"/><rect x="3.5" y="7.9" width="1.7" height="1.3" fill="#fff"/><rect x="6.1" y="3.3" width="1.7" height="1.3" fill="#fff"/><rect x="8.7" y="3.3" width="1.7" height="1.3" fill="#fff"/><circle cx="10.4" cy="7.6" r="3.2" fill="#fff"/><circle cx="10.4" cy="7.6" r="2.4" fill="#0c3c72"/></svg>
<div class="t" style="left:79.50px;top:462.17px;font-size:11.2px;color:#505050;font-weight:normal;">CITIMON</div>
<svg class="r" style="left:53.70px;top:483.08px" width="5" height="8" viewBox="0 0 5 8"><path d="M0.6 0.6L4.4 4L0.6 7.4Z" fill="none" stroke="#555" stroke-width="1"/></svg>
<svg class="r" style="left:62.00px;top:482.88px" width="13" height="11" viewBox="0 0 13 11"><rect x="0" y="0" width="11.3" height="10" fill="#32629a"/><rect x="0.9" y="1.2" width="1.7" height="0.9" fill="#fff" opacity="0.8"/><rect x="3.5" y="1.2" width="1.7" height="0.9" fill="#fff" opacity="0.8"/><rect x="6.1" y="1.2" width="1.7" height="0.9" fill="#fff" opacity="0.8"/><rect x="8.7" y="1.2" width="1.7" height="0.9" fill="#fff" opacity="0.8"/><rect x="0.9" y="3.3" width="1.7" height="1.3" fill="#fff"/><rect x="0.9" y="5.6" width="1.7" height="1.3" fill="#fff"/><rect x="0.9" y="7.9" width="1.7" height="1.3" fill="#fff"/><rect x="3.5" y="3.3" width="1.7" height="1.3" fill="#fff"/><rect x="3.5" y="5.6" width="1.7" height="1.3" fill="#fff"/><rect x="3.5" y="7.9" width="1.7" height="1.3" fill="#fff"/><rect x="6.1" y="3.3" width="1.7" height="1.3" fill="#fff"/><rect x="8.7" y="3.3" width="1.7" height="1.3" fill="#fff"/><circle cx="10.4" cy="7.6" r="3.2" fill="#fff"/><circle cx="10.4" cy="7.6" r="2.4" fill="#0c3c72"/></svg>
<div class="t" style="left:79.50px;top:482.10px;font-size:11.2px;color:#505050;font-weight:normal;">CITIQTR</div>
<svg class="r" style="left:53.70px;top:503.01px" width="5" height="8" viewBox="0 0 5 8"><path d="M0.6 0.6L4.4 4L0.6 7.4Z" fill="none" stroke="#555" stroke-width="1"/></svg>
<svg class="r" style="left:62.00px;top:502.81px" width="13" height="11" viewBox="0 0 13 11"><rect x="0" y="0" width="11.3" height="10" fill="#32629a"/><rect x="0.9" y="1.2" width="1.7" height="0.9" fill="#fff" opacity="0.8"/><rect x="3.5" y="1.2" width="1.7" height="0.9" fill="#fff" opacity="0.8"/><rect x="6.1" y="1.2" width="1.7" height="0.9" fill="#fff" opacity="0.8"/><rect x="8.7" y="1.2" width="1.7" height="0.9" fill="#fff" opacity="0.8"/><rect x="0.9" y="3.3" width="1.7" height="1.3" fill="#fff"/><rect x="0.9" y="5.6" width="1.7" height="1.3" fill="#fff"/><rect x="0.9" y="7.9" width="1.7" height="1.3" fill="#fff"/><rect x="3.5" y="3.3" width="1.7" height="1.3" fill="#fff"/><rect x="3.5" y="5.6" width="1.7" height="1.3" fill="#fff"/><rect x="3.5" y="7.9" width="1.7" height="1.3" fill="#fff"/><rect x="6.1" y="3.3" width="1.7" height="1.3" fill="#fff"/><rect x="8.7" y="3.3" width="1.7" height="1.3" fill="#fff"/><circle cx="10.4" cy="7.6" r="3.2" fill="#fff"/><circle cx="10.4" cy="7.6" r="2.4" fill="#0c3c72"/></svg>
<div class="t" style="left:79.50px;top:502.03px;font-size:11.2px;color:#505050;font-weight:normal;">CITIWK</div>
<svg class="r" style="left:53.70px;top:522.94px" width="5" height="8" viewBox="0 0 5 8"><path d="M0.6 0.6L4.4 4L0.6 7.4Z" fill="none" stroke="#555" stroke-width="1"/></svg>
<svg class="r" style="left:62.00px;top:522.74px" width="13" height="11" viewBox="0 0 13 11"><rect x="0" y="0" width="11.3" height="10" fill="#32629a"/><rect x="0.9" y="1.2" width="1.7" height="0.9" fill="#fff" opacity="0.8"/><rect x="3.5" y="1.2" width="1.7" height="0.9" fill="#fff" opacity="0.8"/><rect x="6.1" y="1.2" width="1.7" height="0.9" fill="#fff" opacity="0.8"/><rect x="8.7" y="1.2" width="1.7" height="0.9" fill="#fff" opacity="0.8"/><rect x="0.9" y="3.3" width="1.7" height="1.3" fill="#fff"/><rect x="0.9" y="5.6" width="1.7" height="1.3" fill="#fff"/><rect x="0.9" y="7.9" width="1.7" height="1.3" fill="#fff"/><rect x="3.5" y="3.3" width="1.7" height="1.3" fill="#fff"/><rect x="3.5" y="5.6" width="1.7" height="1.3" fill="#fff"/><rect x="3.5" y="7.9" width="1.7" height="1.3" fill="#fff"/><rect x="6.1" y="3.3" width="1.7" height="1.3" fill="#fff"/><rect x="8.7" y="3.3" width="1.7" height="1.3" fill="#fff"/><circle cx="10.4" cy="7.6" r="3.2" fill="#fff"/><circle cx="10.4" cy="7.6" r="2.4" fill="#0c3c72"/></svg>
<div class="t" style="left:79.50px;top:521.96px;font-size:11.2px;color:#505050;font-weight:normal;">CITIYR</div>
<div class="r" style="left:15.80px;top:536.77px;width:227.00px;height:19.60px;background:#e9ebef"></div>
<svg class="r" style="left:53.70px;top:542.87px" width="5" height="8" viewBox="0 0 5 8"><path d="M0.6 0.6L4.4 4L0.6 7.4Z" fill="none" stroke="#555" stroke-width="1"/></svg>
<svg class="r" style="left:62.00px;top:542.67px" width="13" height="11" viewBox="0 0 13 11"><rect x="0" y="0" width="11.3" height="10" fill="#32629a"/><rect x="0.9" y="1.2" width="1.7" height="0.9" fill="#fff" opacity="0.8"/><rect x="3.5" y="1.2" width="1.7" height="0.9" fill="#fff" opacity="0.8"/><rect x="6.1" y="1.2" width="1.7" height="0.9" fill="#fff" opacity="0.8"/><rect x="8.7" y="1.2" width="1.7" height="0.9" fill="#fff" opacity="0.8"/><rect x="0.9" y="3.3" width="1.7" height="1.3" fill="#fff"/><rect x="0.9" y="5.6" width="1.7" height="1.3" fill="#fff"/><rect x="0.9" y="7.9" width="1.7" height="1.3" fill="#fff"/><rect x="3.5" y="3.3" width="1.7" height="1.3" fill="#fff"/><rect x="3.5" y="5.6" width="1.7" height="1.3" fill="#fff"/><rect x="3.5" y="7.9" width="1.7" height="1.3" fill="#fff"/><rect x="6.1" y="3.3" width="1.7" height="1.3" fill="#fff"/><rect x="8.7" y="3.3" width="1.7" height="1.3" fill="#fff"/><circle cx="10.4" cy="7.6" r="3.2" fill="#fff"/><circle cx="10.4" cy="7.6" r="2.4" fill="#0c3c72"/></svg>
<div class="t" style="left:79.50px;top:541.89px;font-size:11.2px;color:#505050;font-weight:normal;">CLASS</div>
<svg class="r" style="left:53.70px;top:562.80px" width="5" height="8" viewBox="0 0 5 8"><path d="M0.6 0.6L4.4 4L0.6 7.4Z" fill="none" stroke="#555" stroke-width="1"/></svg>
<svg class="r" style="left:62.00px;top:562.60px" width="13" height="11" viewBox="0 0 13 11"><rect x="0" y="0" width="11.3" height="10" fill="#32629a"/><rect x="0.9" y="1.2" width="1.7" height="0.9" fill="#fff" opacity="0.8"/><rect x="3.5" y="1.2" width="1.7" height="0.9" fill="#fff" opacity="0.8"/><rect x="6.1" y="1.2" width="1.7" height="0.9" fill="#fff" opacity="0.8"/><rect x="8.7" y="1.2" width="1.7" height="0.9" fill="#fff" opacity="0.8"/><rect x="0.9" y="3.3" width="1.7" height="1.3" fill="#fff"/><rect x="0.9" y="5.6" width="1.7" height="1.3" fill="#fff"/><rect x="0.9" y="7.9" width="1.7" height="1.3" fill="#fff"/><rect x="3.5" y="3.3" width="1.7" height="1.3" fill="#fff"/><rect x="3.5" y="5.6" width="1.7" height="1.3" fill="#fff"/><rect x="3.5" y="7.9" width="1.7" height="1.3" fill="#fff"/><rect x="6.1" y="3.3" width="1.7" height="1.3" fill="#fff"/><rect x="8.7" y="3.3" width="1.7" height="1.3" fill="#fff"/><circle cx="10.4" cy="7.6" r="3.2" fill="#fff"/><circle cx="10.4" cy="7.6" r="2.4" fill="#0c3c72"/></svg>
<div class="t" style="left:79.50px;top:561.82px;font-size:11.2px;color:#505050;font-weight:normal;">CLASSFIT</div>
<svg class="r" style="left:53.70px;top:582.73px" width="5" height="8" viewBox="0 0 5 8"><path d="M0.6 0.6L4.4 4L0.6 7.4Z" fill="none" stroke="#555" stroke-width="1"/></svg>
<svg class="r" style="left:62.00px;top:582.53px" width="13" height="11" viewBox="0 0 13 11"><rect x="0" y="0" width="11.3" height="10" fill="#32629a"/><rect x="0.9" y="1.2" width="1.7" height="0.9" fill="#fff" opacity="0.8"/><rect x="3.5" y="1.2" width="1.7" height="0.9" fill="#fff" opacity="0.8"/><rect x="6.1" y="1.2" width="1.7" height="0.9" fill="#fff" opacity="0.8"/><rect x="8.7" y="1.2" width="1.7" height="0.9" fill="#fff" opacity="0.8"/><rect x="0.9" y="3.3" width="1.7" height="1.3" fill="#fff"/><rect x="0.9" y="5.6" width="1.7" height="1.3" fill="#fff"/><rect x="0.9" y="7.9" width="1.7" height="1.3" fill="#fff"/><rect x="3.5" y="3.3" width="1.7" height="1.3" fill="#fff"/><rect x="3.5" y="5.6" width="1.7" height="1.3" fill="#fff"/><rect x="3.5" y="7.9" width="1.7" height="1.3" fill="#fff"/><rect x="6.1" y="3.3" width="1.7" height="1.3" fill="#fff"/><rect x="8.7" y="3.3" width="1.7" height="1.3" fill="#fff"/><circle cx="10.4" cy="7.6" r="3.2" fill="#fff"/><circle cx="10.4" cy="7.6" r="2.4" fill="#0c3c72"/></svg>
<div class="t" style="left:79.50px;top:581.75px;font-size:11.2px;color:#505050;font-weight:normal;">CLNMSG</div>
<div class="r" style="left:267.00px;top:60.00px;width:989.50px;height:600.00px;background:#fff;border:1px solid #eceef1;box-sizing:border-box"></div>
<div class="r" style="left:267.00px;top:37.50px;width:989.50px;height:23.00px;background:#f8f9fa"></div>
<div class="r" style="left:267.00px;top:38.00px;width:136.50px;height:23.00px;background:#fff;border-left:1px solid #eceef1;border-right:1px solid #eceef1;box-sizing:border-box"></div>
<div class="r" style="left:267.00px;top:38.00px;width:136.50px;height:2.00px;background:#02599b"></div>
<svg class="r" style="left:274.00px;top:43.50px" width="13" height="11" viewBox="0 0 13 11"><rect x="0" y="0" width="11.3" height="10" fill="#32629a"/><rect x="0.9" y="1.2" width="1.7" height="0.9" fill="#fff" opacity="0.8"/><rect x="3.5" y="1.2" width="1.7" height="0.9" fill="#fff" opacity="0.8"/><rect x="6.1" y="1.2" width="1.7" height="0.9" fill="#fff" opacity="0.8"/><rect x="8.7" y="1.2" width="1.7" height="0.9" fill="#fff" opacity="0.8"/><rect x="0.9" y="3.3" width="1.7" height="1.3" fill="#fff"/><rect x="0.9" y="5.6" width="1.7" height="1.3" fill="#fff"/><rect x="0.9" y="7.9" width="1.7" height="1.3" fill="#fff"/><rect x="3.5" y="3.3" width="1.7" height="1.3" fill="#fff"/><rect x="3.5" y="5.6" width="1.7" height="1.3" fill="#fff"/><rect x="3.5" y="7.9" width="1.7" height="1.3" fill="#fff"/><rect x="6.1" y="3.3" width="1.7" height="1.3" fill="#fff"/><rect x="8.7" y="3.3" width="1.7" height="1.3" fill="#fff"/><circle cx="10.4" cy="7.6" r="3.2" fill="#fff"/><circle cx="10.4" cy="7.6" r="2.4" fill="#0c3c72"/></svg>
<div class="t" style="left:292.80px;top:44.37px;font-size:10.9px;color:#3a83cb;font-weight:normal;">SASHELP.CLASS</div>
<svg class="r" style="left:390.00px;top:45.00px" width="7" height="7" viewBox="0 0 7 7"><path d="M0.8 0.8L6.2 6.2M6.2 0.8L0.8 6.2" stroke="#555" stroke-width="1.6"/></svg>
<div class="t" style="left:275.20px;top:70.60px;font-size:11.7px;color:#505050;font-weight:normal;">View:</div>
<div class="r" style="left:312.60px;top:64.20px;width:113.00px;height:23.40px;background:#fff;border:1px solid #d9dce1;border-radius:2px;box-sizing:border-box"></div>
<div class="t" style="left:319.40px;top:70.51px;font-size:11.8px;color:#505050;font-weight:normal;">Column names</div>
<svg class="r" style="left:411.80px;top:75.00px" width="6" height="4" viewBox="0 0 6 4"><path d="M0 0H6L3 4Z" fill="#7b8fa8"/></svg>
<svg class="r" style="left:436.00px;top:69.80px" width="13" height="14" viewBox="0 0 13 14"><path d="M1.8 1.2H7.6Q11 1.2 11.4 5.6V6.4" fill="none" stroke="#0d3f7d" stroke-width="1.7"/><rect x="1.2" y="3.9" width="5.6" height="5.6" fill="none" stroke="#0d3f7d" stroke-width="1.4"/><path d="M1.2 6.6H6.8M4 3.9V9.5" stroke="#0d3f7d" stroke-width="0.9"/><rect x="1.8" y="10.8" width="4.6" height="1.9" fill="#0d3f7d"/><circle cx="10.4" cy="10.8" r="2.6" fill="#0d3f7d"/></svg>
<svg class="r" style="left:460.50px;top:69.50px" width="14" height="14" viewBox="0 0 14 14"><rect x="3.4" y="0.7" width="7" height="6.4" fill="#0d3f7d"/><rect x="5.3" y="2.4" width="3.2" height="2.6" fill="#7f9cbf"/><rect x="0.5" y="8.3" width="12.8" height="4.9" fill="#0d3f7d"/><rect x="9.6" y="10.6" width="2.4" height="1" fill="#9fb5cf"/></svg>
<svg class="r" style="left:485.00px;top:70.20px" width="14" height="13" viewBox="0 0 14 13"><path d="M4.4 0.7C1.6 1.7 0.1 4.2 0.4 7C0.6 8.5 1.3 9.5 2.1 10.2L1.3 11.6L6.6 11.9L5.9 6.9L4.6 8.5C3.5 7.7 2.7 6.5 2.8 5.1C2.9 3.3 3.6 1.9 4.4 0.7Z" fill="#0d3f7d"/><path d="M9.6 12.3C12.4 11.3 13.9 8.8 13.6 6C13.4 4.5 12.7 3.5 11.9 2.8L12.7 1.4L7.4 1.1L8.1 6.1L9.4 4.5C10.5 5.3 11.3 6.5 11.2 7.9C11.1 9.7 10.4 11.1 9.6 12.3Z" fill="#0d3f7d"/></svg>
<svg class="r" style="left:511.00px;top:69.80px" width="11" height="14" viewBox="0 0 11 14"><rect x="0.3" y="0.4" width="10.3" height="12.2" fill="#0d3f7d"/><rect x="2.3" y="2.5" width="2.1" height="1.8" fill="#fff"/><rect x="5.8" y="2.9" width="3" height="1.1" fill="#fff"/><rect x="2.3" y="5.8" width="2.1" height="1.8" fill="#fff"/><rect x="5.8" y="6.2" width="3" height="1.1" fill="#fff"/><rect x="2.3" y="9.2" width="2.1" height="1.8" fill="#fff"/><rect x="5.8" y="9.6" width="3" height="1.1" fill="#fff"/></svg>
<svg class="r" style="left:540.00px;top:70.50px" width="14" height="14" viewBox="0 0 14 14"><path d="M0.7 0.7H5L0.7 5Z M13.3 0.7H9L13.3 5Z M0.7 12.3H5L0.7 8Z M13.3 12.3H9L13.3 8Z" fill="#0d3f7d"/><path d="M2 2L5.2 5.2M12 2L8.8 5.2M2 11L5.2 7.8M12 11L8.8 7.8" stroke="#0d3f7d" stroke-width="1.8"/></svg>
<svg class="r" style="left:580.50px;top:69.50px" width="13" height="14" viewBox="0 0 13 14"><ellipse cx="6.25" cy="2.6" rx="5.6" ry="2.1" fill="none" stroke="#0d3f7d" stroke-width="1.5"/><path d="M0.8 3.2Q1.4 5.4 4.6 7.6V12.5Q6.25 13.6 7.9 12.5V7.6Q11.1 5.4 11.7 3.2Q6.25 6.4 0.8 3.2Z" fill="#0d3f7d"/></svg>
<svg class="r" style="left:1081.00px;top:101.00px" width="12" height="9" viewBox="0 0 12 9"><g ><rect x="0" y="1" width="2" height="6.7" fill="#6b92bd"/><path d="M2.3 4.3L6.3 0V2.8H11.7V6.4H6.3V8.6Z" fill="#6b92bd"/></g></svg>
<svg class="r" style="left:1111.70px;top:101.00px" width="12" height="9" viewBox="0 0 12 9"><g ><path d="M0 4.3L4 0V2.8H9.4V6.4H4V8.6Z" fill="#6b92bd"/></g></svg>
<svg class="r" style="left:1200.60px;top:101.00px" width="12" height="9" viewBox="0 0 12 9"><g transform="translate(12,0) scale(-1,1)"><path d="M0 4.3L4 0V2.8H9.4V6.4H4V8.6Z" fill="#6b92bd"/></g></svg>
<svg class="r" style="left:1226.20px;top:101.00px" width="12" height="9" viewBox="0 0 12 9"><g transform="translate(12,0) scale(-1,1)"><rect x="0" y="1" width="2" height="6.7" fill="#6b92bd"/><path d="M2.3 4.3L6.3 0V2.8H11.7V6.4H6.3V8.6Z" fill="#6b92bd"/></g></svg>
<div class="r" style="left:427.40px;top:68.50px;width:1.00px;height:15.00px;background:#dcdfe4"></div>
<div class="r" style="left:530.80px;top:68.50px;width:1.00px;height:15.00px;background:#dcdfe4"></div>
<div class="r" style="left:570.10px;top:68.50px;width:1.00px;height:15.00px;background:#dcdfe4"></div>
<div class="t" style="left:596.80px;top:71.30px;font-size:11.7px;color:#505050;font-weight:normal;">Filter:</div>
<div class="t" style="left:637.60px;top:71.13px;font-size:11.9px;color:#505050;font-weight:normal;">(none)</div>
<div class="t" style="left:282.10px;top:101.97px;font-size:11.85px;color:#505050;font-weight:normal;">Columns</div>
<svg class="r" style="left:498.50px;top:100.50px" width="11" height="11" viewBox="0 0 11 11"><circle cx="5.3" cy="5.2" r="4.4" fill="none" stroke="#1f5a99" stroke-width="1.3"/><path d="M6.2 3.2L4.1 5.2L6.2 7.2" fill="none" stroke="#1f5a99" stroke-width="1.4"/></svg>
<div class="r" style="left:274.00px;top:119.40px;width:238.50px;height:307.00px;background:#fff;border:1px solid #eceef1;box-sizing:border-box"></div>
<div class="r" style="left:275.50px;top:120.40px;width:236.00px;height:23.00px;background:#fff;border-bottom:1px solid #eceef1;box-sizing:border-box"></div>
<div class="r" style="left:302.50px;top:120.40px;width:1.00px;height:23.00px;background:#eceef1"></div>
<svg class="r" style="left:281.20px;top:125.00px" width="12" height="12" viewBox="0 0 12 12"><rect x="0.5" y="0.5" width="10.5" height="10.5" fill="#fff" stroke="#777" stroke-width="1"/><path d="M2.6 5.8L4.8 8L8.8 3.4" fill="none" stroke="#444" stroke-width="1.1"/></svg>
<div class="t" style="left:306.60px;top:126.00px;font-size:11.7px;color:#505050;font-weight:normal;">Select all</div>
<svg class="r" style="left:282.70px;top:150.20px" width="12" height="12" viewBox="0 0 12 12"><rect x="0.5" y="0.5" width="10.5" height="10.5" fill="#fff" stroke="#777" stroke-width="1"/><path d="M2.6 5.8L4.8 8L8.8 3.4" fill="none" stroke="#444" stroke-width="1.1"/></svg>
<svg class="r" style="left:307.00px;top:150.00px" width="13" height="12" viewBox="0 0 13 12"><path d="M6.5 1.2L11.9 10.9H1.1Z" fill="#0d3f7d" stroke="#0d3f7d" stroke-width="1.6" stroke-linejoin="round"/><text x="6.5" y="10.6" font-size="7.2" font-family="Liberation Sans" font-weight="bold" fill="#fff" text-anchor="middle">A</text></svg>
<div class="t" style="left:324.00px;top:150.00px;font-size:11.7px;color:#505050;font-weight:normal;">Name</div>
<svg class="r" style="left:282.70px;top:175.40px" width="12" height="12" viewBox="0 0 12 12"><rect x="0.5" y="0.5" width="10.5" height="10.5" fill="#fff" stroke="#777" stroke-width="1"/><path d="M2.6 5.8L4.8 8L8.8 3.4" fill="none" stroke="#444" stroke-width="1.1"/></svg>
<svg class="r" style="left:307.00px;top:175.20px" width="13" height="12" viewBox="0 0 13 12"><path d="M6.5 1.2L11.9 10.9H1.1Z" fill="#0d3f7d" stroke="#0d3f7d" stroke-width="1.6" stroke-linejoin="round"/><text x="6.5" y="10.6" font-size="7.2" font-family="Liberation Sans" font-weight="bold" fill="#fff" text-anchor="middle">A</text></svg>
<div class="t" style="left:324.00px;top:175.20px;font-size:11.7px;color:#505050;font-weight:normal;">Sex</div>
<svg class="r" style="left:282.70px;top:200.60px" width="12" height="12" viewBox="0 0 12 12"><rect x="0.5" y="0.5" width="10.5" height="10.5" fill="#fff" stroke="#777" stroke-width="1"/><path d="M2.6 5.8L4.8 8L8.8 3.4" fill="none" stroke="#444" stroke-width="1.1"/></svg>
<svg class="r" style="left:307.00px;top:200.00px" width="13" height="13" viewBox="0 0 13 13"><circle cx="6.5" cy="6.5" r="6.2" fill="#0d3f7d"/><text x="2.2" y="9.3" font-size="7.6" font-family="Liberation Sans" fill="#fff" textLength="8.6" lengthAdjust="spacingAndGlyphs">123</text></svg>
<div class="t" style="left:324.00px;top:200.40px;font-size:11.7px;color:#505050;font-weight:normal;">Age</div>
<svg class="r" style="left:282.70px;top:225.80px" width="12" height="12" viewBox="0 0 12 12"><rect x="0.5" y="0.5" width="10.5" height="10.5" fill="#fff" stroke="#777" stroke-width="1"/><path d="M2.6 5.8L4.8 8L8.8 3.4" fill="none" stroke="#444" stroke-width="1.1"/></svg>
<svg class="r" style="left:307.00px;top:225.20px" width="13" height="13" viewBox="0 0 13 13"><circle cx="6.5" cy="6.5" r="6.2" fill="#0d3f7d"/><text x="2.2" y="9.3" font-size="7.6" font-family="Liberation Sans" fill="#fff" textLength="8.6" lengthAdjust="spacingAndGlyphs">123</text></svg>
<div class="t" style="left:324.00px;top:225.60px;font-size:11.7px;color:#505050;font-weight:normal;">Height</div>
<svg class="r" style="left:282.70px;top:251.00px" width="12" height="12" viewBox="0 0 12 12"><rect x="0.5" y="0.5" width="10.5" height="10.5" fill="#fff" stroke="#777" stroke-width="1"/><path d="M2.6 5.8L4.8 8L8.8 3.4" fill="none" stroke="#444" stroke-width="1.1"/></svg>
<svg class="r" style="left:307.00px;top:250.40px" width="13" height="13" viewBox="0 0 13 13"><circle cx="6.5" cy="6.5" r="6.2" fill="#0d3f7d"/><text x="2.2" y="9.3" font-size="7.6" font-family="Liberation Sans" fill="#fff" textLength="8.6" lengthAdjust="spacingAndGlyphs">123</text></svg>
<div class="t" style="left:324.00px;top:250.80px;font-size:11.7px;color:#505050;font-weight:normal;">Weight</div>
<div class="r" style="left:274.00px;top:434.30px;width:238.50px;height:190.50px;background:#fff;border:1px solid #eceef1;box-sizing:border-box"></div>
<div class="r" style="left:393.00px;top:435.00px;width:1.00px;height:165.50px;background:#eceef1"></div>
<div class="t" style="left:279.00px;top:440.90px;font-size:11.7px;color:#505050;font-weight:normal;">Property</div>
<div class="t" style="left:279.00px;top:464.58px;font-size:11.7px;color:#505050;font-weight:normal;">Label</div>
<div class="t" style="left:279.00px;top:488.26px;font-size:11.7px;color:#505050;font-weight:normal;">Name</div>
<div class="t" style="left:279.00px;top:511.94px;font-size:11.7px;color:#505050;font-weight:normal;">Length</div>
<div class="t" style="left:279.00px;top:535.62px;font-size:11.7px;color:#505050;font-weight:normal;">Type</div>
<div class="t" style="left:279.00px;top:559.30px;font-size:11.7px;color:#505050;font-weight:normal;">Format</div>
<div class="t" style="left:279.00px;top:582.98px;font-size:11.7px;color:#505050;font-weight:normal;">Informat</div>
<div class="r" style="left:275.00px;top:457.70px;width:237.00px;height:1.00px;background:#eceef1"></div>
<div class="r" style="left:275.00px;top:481.10px;width:237.00px;height:1.00px;background:#eceef1"></div>
<div class="r" style="left:275.00px;top:504.80px;width:237.00px;height:1.00px;background:#eceef1"></div>
<div class="r" style="left:275.00px;top:528.50px;width:237.00px;height:1.00px;background:#eceef1"></div>
<div class="r" style="left:275.00px;top:552.20px;width:237.00px;height:1.00px;background:#eceef1"></div>
<div class="r" style="left:275.00px;top:575.80px;width:237.00px;height:1.00px;background:#eceef1"></div>
<div class="r" style="left:275.00px;top:599.90px;width:237.00px;height:1.00px;background:#eceef1"></div>
<div class="t" style="left:397.00px;top:440.90px;font-size:11.7px;color:#505050;font-weight:normal;">Value</div>
<div class="t" style="left:531.40px;top:99.61px;font-size:11.8px;color:#505050;font-weight:normal;">Total rows: 19</div>
<div class="t" style="left:613.10px;top:99.61px;font-size:11.8px;color:#505050;font-weight:normal;">Total columns: 5</div>
<div class="t" style="left:1132.90px;top:101.05px;font-size:11.4px;color:#505050;font-weight:normal;">Rows 1-19</div>
<div class="r" style="left:526.50px;top:116.20px;width:722.50px;height:508.50px;background:#fff;border:1px solid #eceef1;box-sizing:border-box"></div>
<div class="r" style="left:548.70px;top:117.00px;width:1.00px;height:472.42px;background:#eceef1"></div>
<div class="r" style="left:617.90px;top:117.00px;width:1.00px;height:472.42px;background:#eceef1"></div>
<div class="r" style="left:656.60px;top:117.00px;width:1.00px;height:472.42px;background:#eceef1"></div>
<div class="r" style="left:830.10px;top:117.00px;width:1.00px;height:472.42px;background:#eceef1"></div>
<div class="r" style="left:1004.40px;top:117.00px;width:1.00px;height:472.42px;background:#eceef1"></div>
<div class="r" style="left:1178.10px;top:117.00px;width:1.00px;height:472.42px;background:#eceef1"></div>
<div class="r" style="left:527.50px;top:328.94px;width:720.50px;height:23.68px;background:#e9ebef"></div>
<div class="r" style="left:831.00px;top:329.54px;width:174.00px;height:23.08px;border:1px dotted #a9c2de;box-sizing:border-box;background:#e7eaf0"></div>
<div class="r" style="left:527.50px;top:139.00px;width:720.50px;height:1.00px;background:#eceef1"></div>
<div class="r" style="left:527.50px;top:162.68px;width:720.50px;height:1.00px;background:#eceef1"></div>
<div class="r" style="left:527.50px;top:186.36px;width:720.50px;height:1.00px;background:#eceef1"></div>
<div class="r" style="left:527.50px;top:210.04px;width:720.50px;height:1.00px;background:#eceef1"></div>
<div class="r" style="left:527.50px;top:233.72px;width:720.50px;height:1.00px;background:#eceef1"></div>
<div class="r" style="left:527.50px;top:257.40px;width:720.50px;height:1.00px;background:#eceef1"></div>
<div class="r" style="left:527.50px;top:281.08px;width:720.50px;height:1.00px;background:#eceef1"></div>
<div class="r" style="left:527.50px;top:304.76px;width:720.50px;height:1.00px;background:#eceef1"></div>
<div class="r" style="left:527.50px;top:328.44px;width:720.50px;height:1.00px;background:#eceef1"></div>
<div class="r" style="left:527.50px;top:352.12px;width:720.50px;height:1.00px;background:#eceef1"></div>
<div class="r" style="left:527.50px;top:375.80px;width:720.50px;height:1.00px;background:#eceef1"></div>
<div class="r" style="left:527.50px;top:399.48px;width:720.50px;height:1.00px;background:#eceef1"></div>
<div class="r" style="left:527.50px;top:423.16px;width:720.50px;height:1.00px;background:#eceef1"></div>
<div class="r" style="left:527.50px;top:446.84px;width:720.50px;height:1.00px;background:#eceef1"></div>
<div class="r" style="left:527.50px;top:470.52px;width:720.50px;height:1.00px;background:#eceef1"></div>
<div class="r" style="left:527.50px;top:494.20px;width:720.50px;height:1.00px;background:#eceef1"></div>
<div class="r" style="left:527.50px;top:517.88px;width:720.50px;height:1.00px;background:#eceef1"></div>
<div class="r" style="left:527.50px;top:541.56px;width:720.50px;height:1.00px;background:#eceef1"></div>
<div class="r" style="left:527.50px;top:565.24px;width:720.50px;height:1.00px;background:#eceef1"></div>
<div class="r" style="left:527.50px;top:588.92px;width:720.50px;height:1.00px;background:#eceef1"></div>
<div class="t" style="left:554.00px;top:118.78px;font-size:11.6px;color:#1e1e1e;font-weight:bold;">Name</div>
<div class="t" style="left:622.00px;top:118.78px;font-size:11.6px;color:#1e1e1e;font-weight:bold;">Sex</div>
<div class="t" style="left:227.10px;width:600px;text-align:right;top:118.78px;font-size:11.6px;color:#1e1e1e;font-weight:bold;">Age</div>
<div class="t" style="left:401.40px;width:600px;text-align:right;top:118.78px;font-size:11.6px;color:#1e1e1e;font-weight:bold;">Height</div>
<div class="t" style="left:575.40px;width:600px;text-align:right;top:118.78px;font-size:11.6px;color:#1e1e1e;font-weight:bold;">Weight</div>
<div class="t" style="left:530.60px;top:145.88px;font-size:11.6px;color:#505050;font-weight:normal;">1</div>
<div class="t" style="left:553.80px;top:145.88px;font-size:11.6px;color:#505050;font-weight:normal;">Alfred</div>
<div class="t" style="left:622.50px;top:145.88px;font-size:11.6px;color:#505050;font-weight:normal;">M</div>
<div class="t" style="left:226.60px;width:600px;text-align:right;top:145.88px;font-size:11.6px;color:#505050;font-weight:normal;">14</div>
<div class="t" style="left:401.20px;width:600px;text-align:right;top:145.88px;font-size:11.6px;color:#505050;font-weight:normal;">69</div>
<div class="t" style="left:575.00px;width:600px;text-align:right;top:145.88px;font-size:11.6px;color:#505050;font-weight:normal;">112.5</div>
<div class="t" style="left:530.60px;top:169.56px;font-size:11.6px;color:#505050;font-weight:normal;">2</div>
<div class="t" style="left:553.80px;top:169.56px;font-size:11.6px;color:#505050;font-weight:normal;">Alice</div>
<div class="t" style="left:622.50px;top:169.56px;font-size:11.6px;color:#505050;font-weight:normal;">F</div>
<div class="t" style="left:226.60px;width:600px;text-align:right;top:169.56px;font-size:11.6px;color:#505050;font-weight:normal;">13</div>
<div class="t" style="left:401.20px;width:600px;text-align:right;top:169.56px;font-size:11.6px;color:#505050;font-weight:normal;">56.5</div>
<div class="t" style="left:575.00px;width:600px;text-align:right;top:169.56px;font-size:11.6px;color:#505050;font-weight:normal;">84</div>
<div class="t" style="left:530.60px;top:193.24px;font-size:11.6px;color:#505050;font-weight:normal;">3</div>
<div class="t" style="left:553.80px;top:193.24px;font-size:11.6px;color:#505050;font-weight:normal;">Barbara</div>
<div class="t" style="left:622.50px;top:193.24px;font-size:11.6px;color:#505050;font-weight:normal;">F</div>
<div class="t" style="left:226.60px;width:600px;text-align:right;top:193.24px;font-size:11.6px;color:#505050;font-weight:normal;">13</div>
<div class="t" style="left:401.20px;width:600px;text-align:right;top:193.24px;font-size:11.6px;color:#505050;font-weight:normal;">65.3</div>
<div class="t" style="left:575.00px;width:600px;text-align:right;top:193.24px;font-size:11.6px;color:#505050;font-weight:normal;">98</div>
<div class="t" style="left:530.60px;top:216.92px;font-size:11.6px;color:#505050;font-weight:normal;">4</div>
<div class="t" style="left:553.80px;top:216.92px;font-size:11.6px;color:#505050;font-weight:normal;">Carol</div>
<div class="t" style="left:622.50px;top:216.92px;font-size:11.6px;color:#505050;font-weight:normal;">F</div>
<div class="t" style="left:226.60px;width:600px;text-align:right;top:216.92px;font-size:11.6px;color:#505050;font-weight:normal;">14</div>
<div class="t" style="left:401.20px;width:600px;text-align:right;top:216.92px;font-size:11.6px;color:#505050;font-weight:normal;">62.8</div>
<div class="t" style="left:575.00px;width:600px;text-align:right;top:216.92px;font-size:11.6px;color:#505050;font-weight:normal;">102.5</div>
<div class="t" style="left:530.60px;top:240.60px;font-size:11.6px;color:#505050;font-weight:normal;">5</div>
<div class="t" style="left:553.80px;top:240.60px;font-size:11.6px;color:#505050;font-weight:normal;">Henry</div>
<div class="t" style="left:622.50px;top:240.60px;font-size:11.6px;color:#505050;font-weight:normal;">M</div>
<div class="t" style="left:226.60px;width:600px;text-align:right;top:240.60px;font-size:11.6px;color:#505050;font-weight:normal;">14</div>
<div class="t" style="left:401.20px;width:600px;text-align:right;top:240.60px;font-size:11.6px;color:#505050;font-weight:normal;">63.5</div>
<div class="t" style="left:575.00px;width:600px;text-align:right;top:240.60px;font-size:11.6px;color:#505050;font-weight:normal;">102.5</div>
<div class="t" style="left:530.60px;top:264.28px;font-size:11.6px;color:#505050;font-weight:normal;">6</div>
<div class="t" style="left:553.80px;top:264.28px;font-size:11.6px;color:#505050;font-weight:normal;">James</div>
<div class="t" style="left:622.50px;top:264.28px;font-size:11.6px;color:#505050;font-weight:normal;">M</div>
<div class="t" style="left:226.60px;width:600px;text-align:right;top:264.28px;font-size:11.6px;color:#505050;font-weight:normal;">12</div>
<div class="t" style="left:401.20px;width:600px;text-align:right;top:264.28px;font-size:11.6px;color:#505050;font-weight:normal;">57.3</div>
<div class="t" style="left:575.00px;width:600px;text-align:right;top:264.28px;font-size:11.6px;color:#505050;font-weight:normal;">83</div>
<div class="t" style="left:530.60px;top:287.96px;font-size:11.6px;color:#505050;font-weight:normal;">7</div>
<div class="t" style="left:553.80px;top:287.96px;font-size:11.6px;color:#505050;font-weight:normal;">Jane</div>
<div class="t" style="left:622.50px;top:287.96px;font-size:11.6px;color:#505050;font-weight:normal;">F</div>
<div class="t" style="left:226.60px;width:600px;text-align:right;top:287.96px;font-size:11.6px;color:#505050;font-weight:normal;">12</div>
<div class="t" style="left:401.20px;width:600px;text-align:right;top:287.96px;font-size:11.6px;color:#505050;font-weight:normal;">59.8</div>
<div class="t" style="left:575.00px;width:600px;text-align:right;top:287.96px;font-size:11.6px;color:#505050;font-weight:normal;">84.5</div>
<div class="t" style="left:530.60px;top:311.64px;font-size:11.6px;color:#505050;font-weight:normal;">8</div>
<div class="t" style="left:553.80px;top:311.64px;font-size:11.6px;color:#505050;font-weight:normal;">Janet</div>
<div class="t" style="left:622.50px;top:311.64px;font-size:11.6px;color:#505050;font-weight:normal;">F</div>
<div class="t" style="left:226.60px;width:600px;text-align:right;top:311.64px;font-size:11.6px;color:#505050;font-weight:normal;">15</div>
<div class="t" style="left:401.20px;width:600px;text-align:right;top:311.64px;font-size:11.6px;color:#505050;font-weight:normal;">62.5</div>
<div class="t" style="left:575.00px;width:600px;text-align:right;top:311.64px;font-size:11.6px;color:#505050;font-weight:normal;">112.5</div>
<div class="t" style="left:530.60px;top:335.32px;font-size:11.6px;color:#505050;font-weight:normal;">9</div>
<div class="t" style="left:553.80px;top:335.32px;font-size:11.6px;color:#505050;font-weight:normal;">Jeffrey</div>
<div class="t" style="left:622.50px;top:335.32px;font-size:11.6px;color:#505050;font-weight:normal;">M</div>
<div class="t" style="left:226.60px;width:600px;text-align:right;top:335.32px;font-size:11.6px;color:#505050;font-weight:normal;">13</div>
<div class="t" style="left:401.20px;width:600px;text-align:right;top:335.32px;font-size:11.6px;color:#505050;font-weight:normal;">62.5</div>
<div class="t" style="left:575.00px;width:600px;text-align:right;top:335.32px;font-size:11.6px;color:#505050;font-weight:normal;">84</div>
<div class="t" style="left:530.60px;top:359.00px;font-size:11.6px;color:#505050;font-weight:normal;">10</div>
<div class="t" style="left:553.80px;top:359.00px;font-size:11.6px;color:#505050;font-weight:normal;">John</div>
<div class="t" style="left:622.50px;top:359.00px;font-size:11.6px;color:#505050;font-weight:normal;">M</div>
<div class="t" style="left:226.60px;width:600px;text-align:right;top:359.00px;font-size:11.6px;color:#505050;font-weight:normal;">12</div>
<div class="t" style="left:401.20px;width:600px;text-align:right;top:359.00px;font-size:11.6px;color:#505050;font-weight:normal;">59</div>
<div class="t" style="left:575.00px;width:600px;text-align:right;top:359.00px;font-size:11.6px;color:#505050;font-weight:normal;">99.5</div>
<div class="t" style="left:530.60px;top:382.68px;font-size:11.6px;color:#505050;font-weight:normal;">11</div>
<div class="t" style="left:553.80px;top:382.68px;font-size:11.6px;color:#505050;font-weight:normal;">Joyce</div>
<div class="t" style="left:622.50px;top:382.68px;font-size:11.6px;color:#505050;font-weight:normal;">F</div>
<div class="t" style="left:226.60px;width:600px;text-align:right;top:382.68px;font-size:11.6px;color:#505050;font-weight:normal;">11</div>
<div class="t" style="left:401.20px;width:600px;text-align:right;top:382.68px;font-size:11.6px;color:#505050;font-weight:normal;">51.3</div>
<div class="t" style="left:575.00px;width:600px;text-align:right;top:382.68px;font-size:11.6px;color:#505050;font-weight:normal;">50.5</div>
<div class="t" style="left:530.60px;top:406.36px;font-size:11.6px;color:#505050;font-weight:normal;">12</div>
<div class="t" style="left:553.80px;top:406.36px;font-size:11.6px;color:#505050;font-weight:normal;">Judy</div>
<div class="t" style="left:622.50px;top:406.36px;font-size:11.6px;color:#505050;font-weight:normal;">F</div>
<div class="t" style="left:226.60px;width:600px;text-align:right;top:406.36px;font-size:11.6px;color:#505050;font-weight:normal;">14</div>
<div class="t" style="left:401.20px;width:600px;text-align:right;top:406.36px;font-size:11.6px;color:#505050;font-weight:normal;">64.3</div>
<div class="t" style="left:575.00px;width:600px;text-align:right;top:406.36px;font-size:11.6px;color:#505050;font-weight:normal;">90</div>
<div class="t" style="left:530.60px;top:430.04px;font-size:11.6px;color:#505050;font-weight:normal;">13</div>
<div class="t" style="left:553.80px;top:430.04px;font-size:11.6px;color:#505050;font-weight:normal;">Louise</div>
<div class="t" style="left:622.50px;top:430.04px;font-size:11.6px;color:#505050;font-weight:normal;">F</div>
<div class="t" style="left:226.60px;width:600px;text-align:right;top:430.04px;font-size:11.6px;color:#505050;font-weight:normal;">12</div>
<div class="t" style="left:401.20px;width:600px;text-align:right;top:430.04px;font-size:11.6px;color:#505050;font-weight:normal;">56.3</div>
<div class="t" style="left:575.00px;width:600px;text-align:right;top:430.04px;font-size:11.6px;color:#505050;font-weight:normal;">77</div>
<div class="t" style="left:530.60px;top:453.72px;font-size:11.6px;color:#505050;font-weight:normal;">14</div>
<div class="t" style="left:553.80px;top:453.72px;font-size:11.6px;color:#505050;font-weight:normal;">Mary</div>
<div class="t" style="left:622.50px;top:453.72px;font-size:11.6px;color:#505050;font-weight:normal;">F</div>
<div class="t" style="left:226.60px;width:600px;text-align:right;top:453.72px;font-size:11.6px;color:#505050;font-weight:normal;">15</div>
<div class="t" style="left:401.20px;width:600px;text-align:right;top:453.72px;font-size:11.6px;color:#505050;font-weight:normal;">66.5</div>
<div class="t" style="left:575.00px;width:600px;text-align:right;top:453.72px;font-size:11.6px;color:#505050;font-weight:normal;">112</div>
<div class="t" style="left:530.60px;top:477.40px;font-size:11.6px;color:#505050;font-weight:normal;">15</div>
<div class="t" style="left:553.80px;top:477.40px;font-size:11.6px;color:#505050;font-weight:normal;">Philip</div>
<div class="t" style="left:622.50px;top:477.40px;font-size:11.6px;color:#505050;font-weight:normal;">M</div>
<div class="t" style="left:226.60px;width:600px;text-align:right;top:477.40px;font-size:11.6px;color:#505050;font-weight:normal;">16</div>
<div class="t" style="left:401.20px;width:600px;text-align:right;top:477.40px;font-size:11.6px;color:#505050;font-weight:normal;">72</div>
<div class="t" style="left:575.00px;width:600px;text-align:right;top:477.40px;font-size:11.6px;color:#505050;font-weight:normal;">150</div>
<div class="t" style="left:530.60px;top:501.08px;font-size:11.6px;color:#505050;font-weight:normal;">16</div>
<div class="t" style="left:553.80px;top:501.08px;font-size:11.6px;color:#505050;font-weight:normal;">Robert</div>
<div class="t" style="left:622.50px;top:501.08px;font-size:11.6px;color:#505050;font-weight:normal;">M</div>
<div class="t" style="left:226.60px;width:600px;text-align:right;top:501.08px;font-size:11.6px;color:#505050;font-weight:normal;">12</div>
<div class="t" style="left:401.20px;width:600px;text-align:right;top:501.08px;font-size:11.6px;color:#505050;font-weight:normal;">64.8</div>
<div class="t" style="left:575.00px;width:600px;text-align:right;top:501.08px;font-size:11.6px;color:#505050;font-weight:normal;">128</div>
<div class="t" style="left:530.60px;top:524.76px;font-size:11.6px;color:#505050;font-weight:normal;">17</div>
<div class="t" style="left:553.80px;top:524.76px;font-size:11.6px;color:#505050;font-weight:normal;">Ronald</div>
<div class="t" style="left:622.50px;top:524.76px;font-size:11.6px;color:#505050;font-weight:normal;">M</div>
<div class="t" style="left:226.60px;width:600px;text-align:right;top:524.76px;font-size:11.6px;color:#505050;font-weight:normal;">15</div>
<div class="t" style="left:401.20px;width:600px;text-align:right;top:524.76px;font-size:11.6px;color:#505050;font-weight:normal;">67</div>
<div class="t" style="left:575.00px;width:600px;text-align:right;top:524.76px;font-size:11.6px;color:#505050;font-weight:normal;">133</div>
<div class="t" style="left:530.60px;top:548.44px;font-size:11.6px;color:#505050;font-weight:normal;">18</div>
<div class="t" style="left:553.80px;top:548.44px;font-size:11.6px;color:#505050;font-weight:normal;">Thomas</div>
<div class="t" style="left:622.50px;top:548.44px;font-size:11.6px;color:#505050;font-weight:normal;">M</div>
<div class="t" style="left:226.60px;width:600px;text-align:right;top:548.44px;font-size:11.6px;color:#505050;font-weight:normal;">11</div>
<div class="t" style="left:401.20px;width:600px;text-align:right;top:548.44px;font-size:11.6px;color:#505050;font-weight:normal;">57.5</div>
<div class="t" style="left:575.00px;width:600px;text-align:right;top:548.44px;font-size:11.6px;color:#505050;font-weight:normal;">85</div>
<div class="t" style="left:530.60px;top:572.12px;font-size:11.6px;color:#505050;font-weight:normal;">19</div>
<div class="t" style="left:553.80px;top:572.12px;font-size:11.6px;color:#505050;font-weight:normal;">William</div>
<div class="t" style="left:622.50px;top:572.12px;font-size:11.6px;color:#505050;font-weight:normal;">M</div>
<div class="t" style="left:226.60px;width:600px;text-align:right;top:572.12px;font-size:11.6px;color:#505050;font-weight:normal;">15</div>
<div class="t" style="left:401.20px;width:600px;text-align:right;top:572.12px;font-size:11.6px;color:#505050;font-weight:normal;">66.5</div>
<div class="t" style="left:575.00px;width:600px;text-align:right;top:572.12px;font-size:11.6px;color:#505050;font-weight:normal;">112</div>
</body></html>
